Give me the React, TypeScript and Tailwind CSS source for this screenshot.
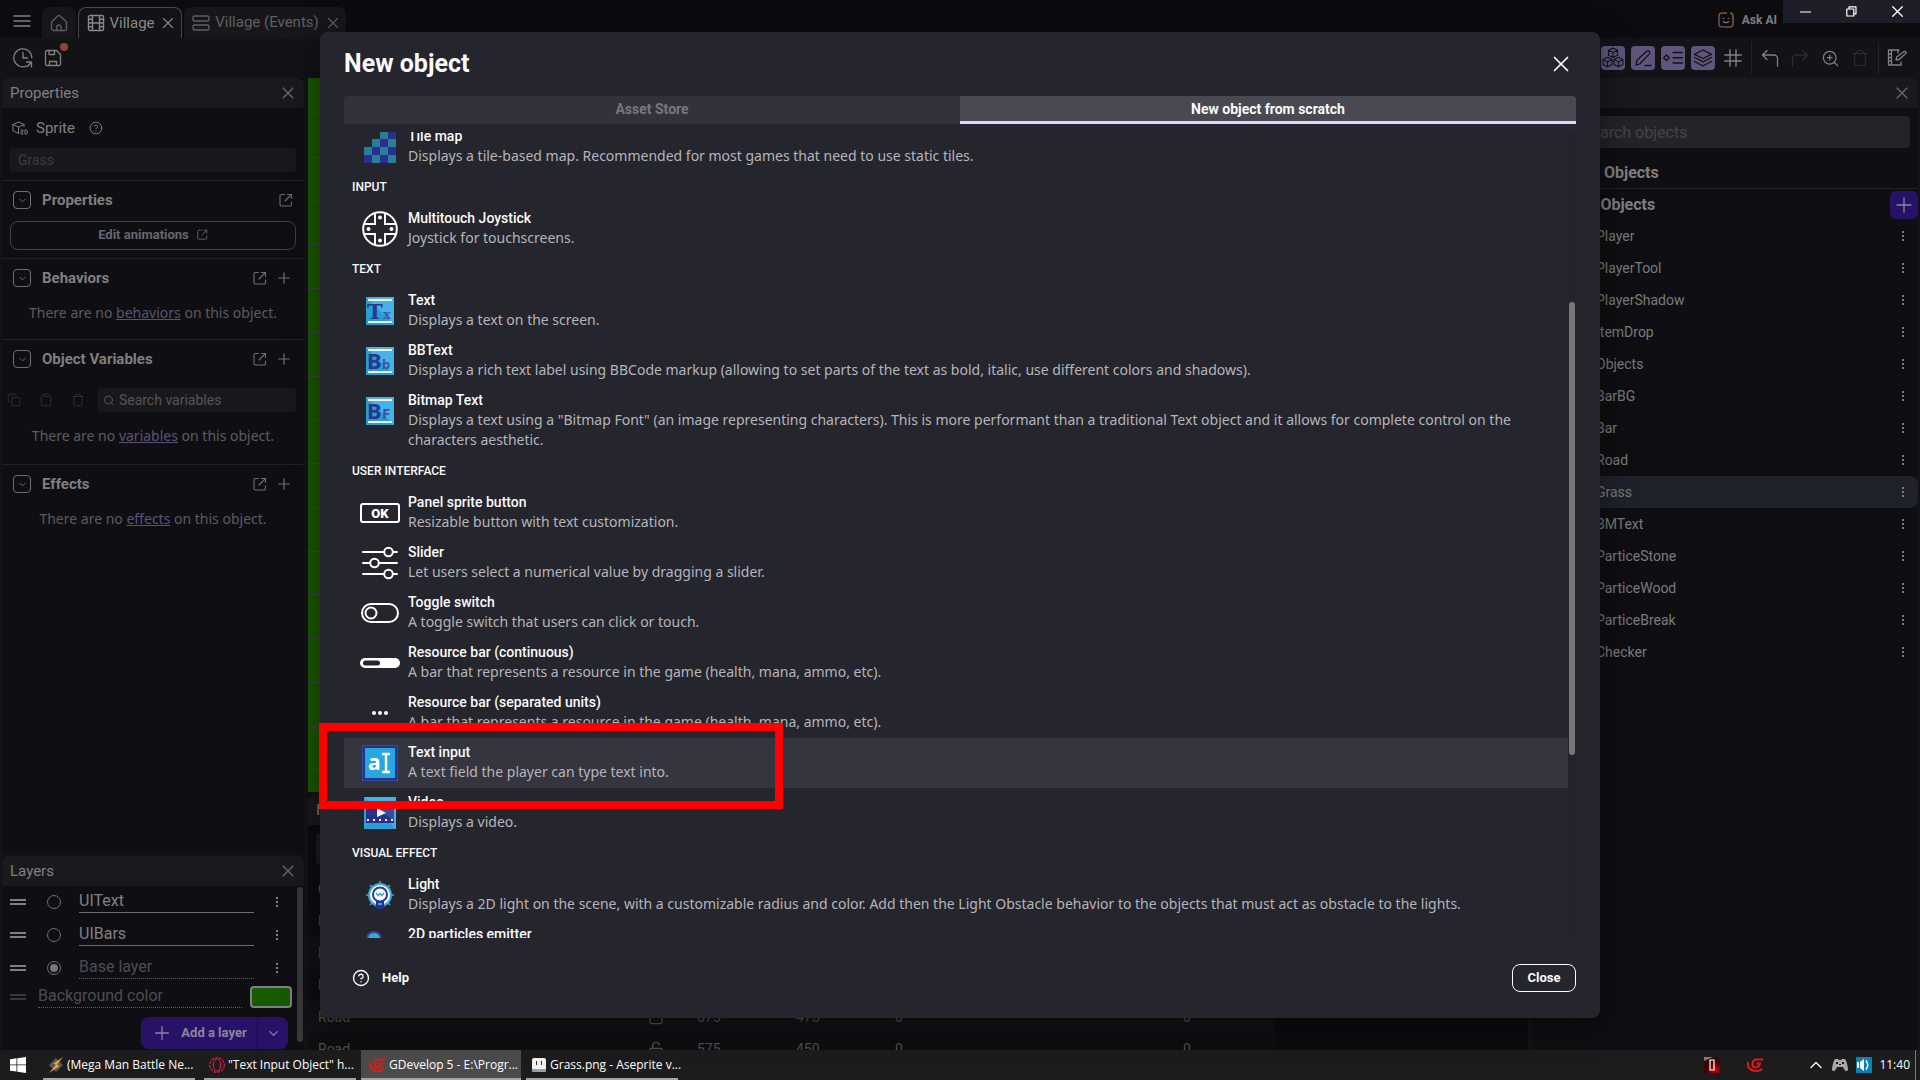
import React, { useState } from 'react';
import {
  Clipboard,
  Copy,
  ChevronDown,
  ChevronUp,
  CircleHelp,
  LockOpen,
  Plus,
  Search,
  Trash,
  X,
  ZoomIn,
} from 'lucide-react';

type ObjectType = { name: string; description: string; icon: React.ReactNode };
type ObjectGroup = { title?: string; items: ObjectType[] };

const OBJECTS = [
  'Player', 'PlayerTool', 'PlayerShadow', 'ItemDrop', 'Objects', 'BarBG', 'Bar',
  'Road', 'Grass', 'BMText', 'ParticeStone', 'ParticeWood', 'ParticeBreak', 'Checker',
];

const INSTANCES = [
  { name: 'Road', x: 675, y: 425 },
  { name: 'Road', x: 575, y: 425 },
  { name: 'Road', x: 625, y: 450 },
  { name: 'Road', x: 675, y: 475 },
  { name: 'Road', x: 575, y: 450 },
];

/* ---------- small icons ---------- */

const Svg = ({ size = 16, box = 16, width = 1, children }: any) => (
  <svg width={size} height={size} viewBox={`0 0 ${box} ${box}`} fill="none" stroke="currentColor" strokeWidth={width} strokeLinecap="round" strokeLinejoin="round" className="shrink-0">
    {children}
  </svg>
);

const ExternalIcon = ({ size = 14 }: { size?: number }) => (
  <Svg size={size} box={14} width={1.1}>
    <path d="M5.500 1.500h-3a1.500 1.500 0 0 0-1.500 1.500v8.500a1.500 1.500 0 0 0 1.500 1.500h8.500a1.500 1.500 0 0 0 1.500-1.500V9M8.500 1.500h4v4M12.500 1.500 6 8" />
  </Svg>
);

const DotsIcon = () => (
  <svg width="4" height="12" viewBox="0 0 4 12" fill="currentColor">
    <path d="M1 1h2v2H1zM1 5h2v2H1zM1 9h2v2H1z" />
  </svg>
);

const HandleIcon = () => (
  <svg width="16" height="8" viewBox="0 0 16 8" fill="currentColor"><path d="M0 1h16v2H0zM0 5h16v2H0z" /></svg>
);

const FilmIcon = () => (
  <Svg size={18} box={18} width={1.4}>
    <rect x="1.500" y="1.500" width="15" height="15" rx="1.500" />
    <path d="M5.500 1.500v15M12.500 1.500v15M5.500 9h7M1.500 5.200h4M1.500 9h4M1.500 12.800h4M12.500 5.200h4M12.500 9h4M12.500 12.800h4" />
  </Svg>
);

const EventsIcon = () => (
  <Svg size={18} box={18} width={1.3}>
    <rect x="1" y="2" width="16" height="5" rx="1.500" />
    <rect x="1" y="11" width="16" height="5" rx="1.500" />
  </Svg>
);

const HomeIcon = () => (
  <Svg size={18} box={18} width={1.3}>
    <path d="M1.500 8 7.800 2a1.800 1.800 0 0 1 2.400 0L16.500 8v6.500a2 2 0 0 1-2 2h-11a2 2 0 0 1-2-2zM6.800 16.500v-3.300a2.200 2.200 0 0 1 4.400 0v3.300" />
  </Svg>
);

const HistoryIcon = () => (
  <Svg size={20} box={20} width={1.3}>
    <path d="M18.800 9.500A9 9 0 1 0 13.500 18M10 4.500V10h4.500M13.500 14h5v5M18.500 14l-4 4.500" />
  </Svg>
);

const SaveIcon = () => (
  <Svg size={18} box={18} width={1.3}>
    <path d="M1.500 3a1.500 1.500 0 0 1 1.500-1.500h9.500l4 4V15a1.500 1.500 0 0 1-1.500 1.500H3A1.500 1.500 0 0 1 1.500 15zM5 1.500v4h5.500v-4M5.500 16.500v-4h7v4" />
  </Svg>
);

const GridIcon = () => (
  <Svg size={18} box={18} width={1.4}>
    <path d="M6 .8v16.400M12 .8v16.400M.8 6h16.400M.8 12h16.400" />
  </Svg>
);

const CubeIcon = () => (
  <Svg size={16} box={16} width={1}>
    <path d="M12 6.500V4.500L6.500 2 1 4.500v6.200L6.500 13.500M1 4.500l5.500 2.600L12 4.500M6.500 7.100v6.400" />
    <path d="M9 10h1.800v2H9v2h2M13 10v4h1c2 0 2-4 0-4z" />
  </Svg>
);

const CubesIcon = () => (
  <Svg size={24} box={24} width={1.1}>
    <path d="m12 2 4.500 2.300v5L12 11.500 7.500 9.300v-5zM7.500 4.300 12 6.500l4.500-2.200M12 6.500v5" />
    <path d="m6.500 11.200 4.500 2.300v5l-4.500 2.300L2 18.500v-5zM2 13.500l4.500 2.200 4.500-2.200M6.500 15.700v5" />
    <path d="m17.500 11.200 4.500 2.300v5l-4.500 2.300-4.500-2.300v-5zM13 13.500l4.500 2.200 4.500-2.200M17.500 15.700v5" />
  </Svg>
);

const PencilIcon = () => (
  <Svg size={24} box={24} width={1.3}>
    <path d="M5 19l.8-4.500L15.500 5.200c2-1.500 4.200.8 2.800 2.700L9 17.800zM14 19.500h6" />
  </Svg>
);

const ListIcon = () => (
  <Svg size={24} box={24} width={1.4}>
    <path d="m5.500 9 2.800 2.800-2.800 2.800-2.800-2.800zM12 6.500h9.500M12 11.800h9.500M12 17h9.500" />
  </Svg>
);

const LayersIcon = () => (
  <Svg size={24} box={24} width={1.3}>
    <path d="m12 4 8.500 4.300-8.500 4.200-8.500-4.200zM3.500 11.500 12 15.800l8.500-4.300M3.500 15.500 12 19.800l8.500-4.300" />
  </Svg>
);

const UndoIcon = () => (
  <Svg size={18} box={18} width={1.3}>
    <path d="M6 1.500 1.500 6 6 10.500M1.500 6H13a3.500 3.500 0 0 1 3.500 3.500V17" />
  </Svg>
);

const RedoIcon = () => (
  <Svg size={18} box={18} width={1.3}>
    <path d="M12 1.500 16.500 6 12 10.500M16.500 6H5a3.500 3.500 0 0 0-3.500 3.500V17" />
  </Svg>
);

const EditSceneIcon = () => (
  <Svg size={20} box={20} width={1.3}>
    <path d="M12 2H1.500v15H14v-3M4.500 2v15M1.500 6h3M1.500 9.500h3M1.500 13h3M11 2v3M9 12l.7-3L17 3.500c1.500-.7 2.700.8 1.700 2L12 11.500z" />
  </Svg>
);

const AskIcon = () => (
  <svg width="16" height="16" viewBox="0 0 16 16" fill="none">
    <defs>
      <linearGradient id="ask" x1="0" y1="1" x2="1" y2="0">
        <stop offset="0" stopColor="#5b4670" />
        <stop offset="1" stopColor="#8a5a24" />
      </linearGradient>
    </defs>
    <path d="M9 1H4a3 3 0 0 0-3 3v8a3 3 0 0 0 3 3h8a3 3 0 0 0 3-3V4a3 3 0 0 0-3-3" stroke="url(#ask)" strokeWidth="1.600" />
    <path d="M5.500 6v1M10.500 6v1M5 9.500q3 2.500 6 0" stroke="#808084" strokeWidth="1.200" />
  </svg>
);

/* ---------- object type icons ---------- */

const TileMapIcon = () => (
  <svg width="32" height="32" viewBox="0 0 4 4" shapeRendering="crispEdges">
    <path fill="#2b7ba1" d="M2 0h1v1H2zM1 1h1v1H1zM3 1h1v1H3zM0 2h1v1H0zM2 2h1v1H2zM1 3h1v1H1zM3 3h1v1H3z" />
    <path fill="#26318a" d="M3 0h1v1H3zM2 1h1v1H2zM1 2h1v1H1zM3 2h1v1H3zM0 3h1v1H0zM2 3h1v1H2z" />
  </svg>
);

const JoystickIcon = () => (
  <svg width="36" height="36" viewBox="0 0 36 36" fill="none" stroke="#fff" strokeWidth="2">
    <circle cx="18" cy="18" r="16.800" />
    <path d="M13 2.500V13H2.500M23 2.500V13h10.500M13 33.500V23H2.500M23 33.500V23h10.500" />
    <g fill="#fff" stroke="none">
      <circle cx="18" cy="6.500" r="2" /><circle cx="18" cy="29.500" r="2" />
      <circle cx="6.500" cy="18" r="2" /><circle cx="29.500" cy="18" r="2" />
    </g>
  </svg>
);

const LetterIcon = ({ big, small, serif }: { big: string; small: string; serif?: boolean }) => (
  <svg width="28" height="28" viewBox="0 0 28 28">
    <path fill="#259fd6" d="M0 0h28v28H0z" />
    <path fill="#45b3e7" d="M0 0h28v28z" />
    <path fill="#f4f6f8" d="M2 2h24v2H2zM2 24h24v2H2z" />
    <g fill="#2b378c" fontWeight="bold" className={serif ? 'font-["DejaVu_Serif",serif]' : 'font-["Noto_Sans",sans-serif]'}>
      <text x="1" y="22" fontSize={serif ? 21 : 22}>{big}</text>
      <text x={serif ? 17 : 16} y="22" fontSize={small === 'F' ? 15 : 13} fill="#3a55a5">{small}</text>
    </g>
  </svg>
);

const OkIcon = () => (
  <svg width="40" height="20" viewBox="0 0 40 20">
    <rect x="1" y="1" width="38" height="18" rx="2" fill="none" stroke="#fff" strokeWidth="2" />
    <text x="20" y="15" textAnchor="middle" fontSize="13" fontWeight="900" fill="#fff" className="font-[Roboto,sans-serif]">OK</text>
  </svg>
);

const SliderIcon = () => (
  <svg width="36" height="34" viewBox="0 0 36 34" fill="none" stroke="#fff" strokeWidth="2" strokeLinecap="round">
    <path d="M1 6h21M31 6h4M1 17h7M17 17h18M1 28h21M31 28h4" />
    <circle cx="26.500" cy="6" r="4.300" /><circle cx="12.500" cy="17" r="4.300" /><circle cx="26.500" cy="28" r="4.300" />
  </svg>
);

const ToggleIcon = () => (
  <svg width="38" height="20" viewBox="0 0 38 20" fill="none" stroke="#fff" strokeWidth="2">
    <rect x="1" y="1" width="36" height="18" rx="9" />
    <circle cx="10" cy="10" r="5.500" />
  </svg>
);

const BarIcon = () => (
  <svg width="40" height="10" viewBox="0 0 40 10">
    <rect width="40" height="10" rx="5" fill="#fff" />
    <rect x="3" y="2.500" width="17" height="5" rx="2.500" fill="#25252e" />
  </svg>
);

const UnitsIcon = () => (
  <svg width="16" height="4" viewBox="0 0 16 4" fill="#fff">
    <circle cx="2" cy="2" r="2" /><circle cx="8" cy="2" r="2" /><circle cx="14" cy="2" r="2" />
  </svg>
);

const TextInputIcon = () => (
  <svg width="36" height="36" viewBox="0 0 36 36">
    <path fill="#2c4fa3" d="M0 0h36v36H0z" />
    <path fill="#26318a" d="M1 1h34v34H1z" />
    <path fill="#28a8e0" d="M3 3h30v30H3z" />
    <text x="6" y="25" fontSize="21" fontWeight="bold" fill="#fff" className='font-["Noto_Sans",sans-serif]'>a</text>
    <path d="M20 9h8M24 9v18M20 27h8" stroke="#fff" strokeWidth="2.400" />
  </svg>
);

const VideoIcon = () => (
  <svg width="32" height="32" viewBox="0 0 32 32">
    <path fill="#2a9fd6" d="M0 0h32v32H0z" />
    <path fill="#40b4e5" d="M0 0h32v32z" />
    <path fill="#26318a" d="M2 6h28v20H2z" />
    <path fill="#3c4a9c" d="M6 6h24v18z" />
    <path fill="#f4f6f8" d="m13 11 9 5-9 4zM3 8h2v2H3zM9 8h2v2H9zM15 8h2v2h-2zM21 8h2v2h-2zM27 8h2v2h-2zM3 22h2v2H3zM9 22h2v2H9zM15 22h2v2h-2zM21 22h2v2h-2zM27 22h2v2h-2z" />
  </svg>
);

const LightIcon = () => (
  <svg width="28" height="28" viewBox="0 0 28 28">
    <path d="M14 0v28M0 14h28M4 4l20 20M24 4 4 24" stroke="#3ba9dd" strokeWidth="1.500" />
    <circle cx="14" cy="14" r="12" fill="#3ba9dd" />
    <circle cx="14" cy="14" r="10" fill="#fff" />
    <circle cx="14" cy="13.500" r="7" fill="#fff" stroke="#2f3a94" strokeWidth="2" />
    <path fill="#26318a" d="M10 20h8v6l-2 2h-4l-2-2z" />
    <path fill="#3ba9dd" d="M12 22h4v2h-4z" />
    <path d="m10 12 2 2.500 2-2 2 2 2-2.500" fill="none" stroke="#3ba9dd" strokeWidth="1.600" />
  </svg>
);

const ParticlesIcon = () => (
  <svg width="28" height="28" viewBox="0 0 28 28">
    <circle cx="8" cy="8" r="7" fill="#3ba9dd" stroke="#2f4a9f" strokeWidth="2" />
    <circle cx="20" cy="18" r="6" fill="#26318a" />
  </svg>
);

const GROUPS: ObjectGroup[] = [
  {
    items: [
      { name: 'Tile map', description: 'Displays a tile-based map. Recommended for most games that need to use static tiles.', icon: <TileMapIcon /> },
    ],
  },
  {
    title: 'Input',
    items: [
      { name: 'Multitouch Joystick', description: 'Joystick for touchscreens.', icon: <JoystickIcon /> },
    ],
  },
  {
    title: 'Text',
    items: [
      { name: 'Text', description: 'Displays a text on the screen.', icon: <LetterIcon big="T" small="x" serif /> },
      { name: 'BBText', description: 'Displays a rich text label using BBCode markup (allowing to set parts of the text as bold, italic, use different colors and shadows).', icon: <LetterIcon big="B" small="b" /> },
      { name: 'Bitmap Text', description: 'Displays a text using a "Bitmap Font" (an image representing characters). This is more performant than a traditional Text object and it allows for complete control on the characters aesthetic.', icon: <LetterIcon big="B" small="F" /> },
    ],
  },
  {
    title: 'User interface',
    items: [
      { name: 'Panel sprite button', description: 'Resizable button with text customization.', icon: <OkIcon /> },
      { name: 'Slider', description: 'Let users select a numerical value by dragging a slider.', icon: <SliderIcon /> },
      { name: 'Toggle switch', description: 'A toggle switch that users can click or touch.', icon: <ToggleIcon /> },
      { name: 'Resource bar (continuous)', description: 'A bar that represents a resource in the game (health, mana, ammo, etc).', icon: <BarIcon /> },
      { name: 'Resource bar (separated units)', description: 'A bar that represents a resource in the game (health, mana, ammo, etc).', icon: <UnitsIcon /> },
      { name: 'Text input', description: 'A text field the player can type text into.', icon: <TextInputIcon /> },
      { name: 'Video', description: 'Displays a video.', icon: <VideoIcon /> },
    ],
  },
  {
    title: 'Visual effect',
    items: [
      { name: 'Light', description: 'Displays a 2D light on the scene, with a customizable radius and color. Add then the Light Obstacle behavior to the objects that must act as obstacle to the lights.', icon: <LightIcon /> },
      { name: '2D particles emitter', description: 'Displays a large number of small particles to create visual effects.', icon: <ParticlesIcon /> },
    ],
  },
];

/* ---------- editor ---------- */

const TitleBar = () => (
  <header className="flex h-[38px] shrink-0 items-end bg-[#0c0c10] pl-[13px]">
    <button aria-label="Main menu" className="mr-[11px] flex h-[34px] items-center text-[#808084]">
      <Svg size={18} box={18} width={1.4}><path d="M1 4h16M1 9h16M1 14h16" /></Svg>
    </button>
    <div className="flex items-end gap-0.5">
      <button aria-label="Home" className="flex h-[31px] w-[34px] items-center justify-center rounded-t-lg bg-[#17171b] text-[#5f5f63]"><HomeIcon /></button>
      <div className="flex h-[31px] w-[104px] items-center justify-between rounded-t-lg border border-b-0 border-[#47474c] bg-[#131317] pr-1 pl-2 text-[#87878a]">
        <FilmIcon />
        <span className="text-[15px]">Village</span>
        <button aria-label="Close Village"><X size={18} strokeWidth={1.5} /></button>
      </div>
      <div className="flex h-[31px] w-[162px] items-center justify-between rounded-t-lg bg-[#17171b] pr-1 pl-2 text-[#5f5f63]">
        <EventsIcon />
        <span className="text-[15px]">Village (Events)</span>
        <button aria-label="Close Village (Events)"><X size={18} strokeWidth={1.5} /></button>
      </div>
    </div>
    <button className="mr-[6px] mb-[10px] ml-auto flex items-center gap-2 text-[12px] leading-4 font-bold text-[#7c7c80]">
      <AskIcon />
      Ask AI
    </button>
    <div className="mb-auto flex h-[23px] w-[137px] items-center justify-around bg-[#1e1e29] text-white">
      <button aria-label="Minimize"><Svg size={11} box={11} width={1.2}><path d="M.5 6h10" /></Svg></button>
      <button aria-label="Restore"><Svg size={11} box={11} width={1.2}><path d="M.8 3h7v7h-7zM3 3V.8h7v7H8" /></Svg></button>
      <button aria-label="Close window"><Svg size={11} box={11} width={1.3}><path d="m.7.7 9.600 9.600M10.300.7.7 10.300" /></Svg></button>
    </div>
  </header>
);

const ToolToggle = ({ label, children }: { label: string; children: React.ReactNode }) => (
  <button aria-label={label} className="flex size-6 items-center justify-center rounded-sm bg-[#5f557c] text-[#131317]">{children}</button>
);

const Toolbar = () => (
  <div className="flex h-10 shrink-0 items-center bg-[#131317] pr-[11px] pl-[13px] text-[#808084]">
    <button aria-label="History" className="mr-[11px]"><HistoryIcon /></button>
    <button aria-label="Save" className="relative">
      <SaveIcon />
      <span className="absolute -top-1.5 -right-1.5 size-2 rounded-full bg-[#8b4436]" />
    </button>
    <div className="ml-auto flex items-center gap-[6px]">
      <ToolToggle label="Objects"><CubesIcon /></ToolToggle>
      <ToolToggle label="Properties"><PencilIcon /></ToolToggle>
      <ToolToggle label="Instances"><ListIcon /></ToolToggle>
      <ToolToggle label="Layers"><LayersIcon /></ToolToggle>
      <button aria-label="Grid" className="flex w-6 justify-center"><GridIcon /></button>
      <span className="h-8 w-px bg-[#232328]" />
      <button aria-label="Undo" className="flex w-6 justify-center"><UndoIcon /></button>
      <button aria-label="Redo" className="flex w-6 justify-center text-[#2c2c30]"><RedoIcon /></button>
      <button aria-label="Zoom in" className="flex w-6 justify-center"><ZoomIn size={19} strokeWidth={1.6} /></button>
      <button aria-label="Delete" className="flex w-6 justify-center text-[#2c2c30]"><Trash size={18} strokeWidth={1.6} /></button>
      <span className="h-8 w-px bg-[#232328]" />
      <button aria-label="Edit scene" className="flex w-6 justify-center"><EditSceneIcon /></button>
    </div>
  </div>
);

const PanelHeader = ({ title }: { title: string }) => (
  <div className="flex h-[30px] shrink-0 items-center justify-between rounded-t-md bg-[#1a1a1e] pr-[6px] pl-2 text-[15px] text-[#808083]">
    {title}
    <button aria-label="Close panel" className="text-[#6d6d78]"><X size={20} strokeWidth={1.4} /></button>
  </div>
);

const Section = ({ title, add, children }: { title: string; add?: boolean; children: React.ReactNode }) => (
  <section className="border-t border-[#212126]">
    <div className="flex h-10 items-center pr-[11px] pb-0.5 pl-[11px] text-[#6d6d78]">
      <button aria-label={`Fold ${title}`} className="flex size-[18px] items-center justify-center rounded-sm border border-[#6d6d78]"><ChevronDown size={11} /></button>
      <h3 className="ml-[11px] text-[15px] font-bold text-[#7f7f80]">{title}</h3>
      <div className="ml-auto flex items-center gap-2">
        <button aria-label={`Open ${title}`}><ExternalIcon /></button>
        {add && <button aria-label={`Add to ${title}`}><Plus size={18} strokeWidth={1.6} /></button>}
      </div>
    </div>
    {children}
  </section>
);

const EmptyNote = ({ word }: { word: string }) => (
  <p className='text-center font-["Noto_Sans",sans-serif] text-[14px] leading-[28px] text-[#5c5c5f]'>
    There are no <a href={`#${word}`} className="text-[#5a5373] underline">{word}</a> on this object.
  </p>
);

const PropertiesPanel = () => (
  <div className="flex min-h-0 flex-1 flex-col bg-[#0f0f13]">
    <PanelHeader title="Properties" />
    <div className="flex h-10 items-center gap-2 pl-[10px] text-[15px] text-[#7f7f80]">
      <CubeIcon />
      Sprite
      <button aria-label="Help about sprites" className="ml-1.5"><CircleHelp size={14} strokeWidth={1.6} /></button>
    </div>
    <input aria-label="Object name" placeholder="Grass" className="mx-2 mb-2 h-6 rounded bg-[#19191d] px-2 text-[14px] text-[#808083] outline-none placeholder:text-[#3b3b3e]" />
    <Section title="Properties">
      <button className="mx-2 mb-2 flex h-[29px] w-[286px] items-center justify-center gap-2 rounded-lg border border-[#3f3f47] pb-0.5 text-[13px] font-bold text-[#66666f]">
        Edit animations <ExternalIcon size={11} />
      </button>
    </Section>
    <Section title="Behaviors" add>
      <div className="pb-3"><EmptyNote word="behaviors" /></div>
    </Section>
    <Section title="Object Variables" add>
      <div className="flex items-center pt-2 pr-2 pl-[5px] text-[#2f2f34]">
        <button aria-label="Copy"><Copy size={14} strokeWidth={1.6} /></button>
        <button aria-label="Paste" className="ml-[18px]"><Clipboard size={14} strokeWidth={1.6} /></button>
        <button aria-label="Delete variable" className="ml-[18px]"><Trash size={14} strokeWidth={1.6} /></button>
        <label className="ml-[13px] flex h-6 flex-1 items-center gap-1 rounded bg-[#19191d] px-[5px] text-[#5c5c5f]">
          <Search size={13} strokeWidth={1.8} />
          <input aria-label="Search variables" placeholder="Search variables" className="w-full bg-transparent text-[14px] outline-none placeholder:text-[#555558]" />
        </label>
      </div>
      <div className="pt-[10px] pb-[14px]"><EmptyNote word="variables" /></div>
    </Section>
    <Section title="Effects" add>
      <EmptyNote word="effects" />
    </Section>
  </div>
);

const LayerRow = ({ name, base }: { name: string; base?: boolean }) => (
  <div className="flex h-[33px] items-center pr-[18px] pb-px pl-2 text-[#808083]">
    <HandleIcon />
    <input type="radio" name="layer" aria-label={`Select ${name}`} defaultChecked={base} className="ml-[22px] size-3 shrink-0 appearance-none rounded-full outline-1 outline-[#6d6d78] checked:border-2 checked:border-[#0f0f13] checked:bg-[#77737f]" />
    {base ? (
      <input aria-label="Base layer name" placeholder={name} className="ml-[19px] h-[22px] w-[175px] border-b border-dotted border-[#5c5c62] bg-transparent pb-0.5 text-[16px] outline-none placeholder:text-[#4c4c51]" />
    ) : (
      <input aria-label={`${name} name`} defaultValue={name} className="ml-[19px] h-[22px] w-[175px] border-b border-[#6d6d78] bg-transparent pb-0.5 text-[16px] outline-none" />
    )}
    <button aria-label={`${name} menu`} className="ml-auto"><DotsIcon /></button>
  </div>
);

const LayersPanel = () => (
  <div className="flex shrink-0 flex-col bg-[#0f0f13]">
    <PanelHeader title="Layers" />
    <div className="flex h-[164px]">
      <div className="min-w-0 flex-1">
        <LayerRow name="UIText" />
        <LayerRow name="UIBars" />
        <LayerRow name="Base layer" base />
        <div className="flex h-6 items-center pl-2 text-[#39393c]">
          <HandleIcon />
          <input aria-label="Background color" placeholder="Background color" className="mr-2 ml-3 h-[22px] w-[204px] border-b border-dotted border-[#5c5c62] bg-transparent pb-0.5 text-[16px] outline-none placeholder:text-[#4c4c51]" />
          <button aria-label="Pick the background color" className="h-[22px] w-[42px] rounded-sm border-2 border-[#808083] bg-[#175a00]" />
        </div>
        <div className="mt-2 mr-[9px] flex h-8 justify-end text-[13px] font-bold text-[#8b859c]">
          <button className="flex w-[116px] items-center justify-center gap-2 rounded-l-lg bg-[#271267]"><Plus size={22} strokeWidth={1.4} />Add a layer</button>
          <button aria-label="More layer types" className="flex w-[31px] items-center justify-center rounded-r-lg border-l border-[#1c0d4b] bg-[#271267]"><ChevronDown size={15} /></button>
        </div>
      </div>
      <div className="mt-px mr-px h-[155px] w-[6px] rounded-full bg-[#39393c]" />
    </div>
  </div>
);

const SceneCanvas = () => (
  <svg className="min-h-0 w-full flex-1 bg-[#195700]" aria-label="Scene">
    {Array.from({ length: 17 }, (_, i) => (
      <path key={i} d={`M0 ${35.5 + Math.round(i * 43.75)}h1220`} stroke="#3a4850" />
    ))}
  </svg>
);

const InstancesPanel = () => (
  <div className="mt-[3px] flex h-[255px] shrink-0 flex-col overflow-hidden bg-[#0c0c10]">
    <PanelHeader title="Instances List" />
    <input aria-label="Search instances" placeholder="Search instances" className="m-2 h-8 shrink-0 rounded bg-[#1b1b1f] px-3 text-[16px] outline-none placeholder:text-[#444448]" />
    <table className="w-[967px] table-fixed text-left text-[14px] text-[#515155]">
      <thead>
        <tr className="h-8">
          <th className="w-[340px] pl-[10px]">Object name</th>
          <th className="w-[49px]"><LockOpen size={16} aria-label="Locked" /></th>
          <th className="w-[99px]">X</th>
          <th className="w-[99px]">Y</th>
          <th className="w-[288px]">Angle</th>
          <th>Z</th>
        </tr>
      </thead>
      <tbody>
        {INSTANCES.map((instance, i) => (
          <tr key={i} className="h-8 odd:bg-[#0d0e10] even:bg-[#111215]">
            <td className="pl-[10px]">{instance.name}</td>
            <td><LockOpen size={16} /></td>
            <td>{instance.x}</td>
            <td>{instance.y}</td>
            <td>0</td>
            <td>0</td>
          </tr>
        ))}
      </tbody>
    </table>
  </div>
);

const ObjectsPanel = () => (
  <aside className="mr-0.5 flex w-[386px] shrink-0 flex-col bg-[#0f0f13]">
    <PanelHeader title="Objects" />
    <input aria-label="Search objects" placeholder="Search objects" className="m-2 h-8 rounded bg-[#242428] pl-[42px] text-[16px] outline-none placeholder:text-[#444448]" />
    <h3 className="flex h-[33px] items-center border-b border-[#212126] pt-px pl-[22px] text-[16px] font-bold text-[#7f7f80]">Global Objects</h3>
    <div className="flex h-[31px] items-center justify-between pl-5">
      <h3 className="text-[16px] font-bold text-[#7f7f80]">Scene Objects</h3>
      <button aria-label="Add an object" className="flex size-7 items-center justify-center rounded-md bg-[#271267] text-[#8b859c]"><Plus size={24} strokeWidth={1.3} /></button>
    </div>
    <ul>
      {OBJECTS.map((name) => (
        <li key={name} className={`flex h-8 items-center justify-between rounded-lg pr-[13px] pl-16 text-[14px] text-[#7b7b7d] ${name === 'Grass' ? 'bg-[#1f222a]' : ''}`}>
          {name}
          <button aria-label={`${name} menu`}><DotsIcon /></button>
        </li>
      ))}
    </ul>
  </aside>
);

/* ---------- dialog ---------- */

const NewObjectDialog = () => {
  const [selected, setSelected] = useState('Text input');
  return (
    <div className="absolute inset-x-0 top-0 bottom-[30px] flex justify-center px-8 py-8">
      <div role="dialog" aria-label="New object" className="relative flex w-full max-w-[1280px] flex-col rounded-lg bg-[#25252e] px-6 text-[#fafafa] shadow-[0_8px_36px_rgba(0,0,0,0.45)]">
        <div className="flex h-16 shrink-0 items-center justify-between pr-0.5 pb-px">
          <h2 className="text-[25px] font-bold">New object</h2>
          <button aria-label="Close dialog"><X size={26} strokeWidth={1.6} /></button>
        </div>
        <div role="tablist" className="flex h-7 shrink-0 text-[14px] font-bold">
          <button role="tab" aria-selected="false" className="flex-1 rounded-tl bg-[#32323b] pb-0.5 text-[#77777b]">Asset Store</button>
          <button role="tab" aria-selected="true" className="flex-1 rounded-tr border-b-[3px] border-[#e0d7ff] bg-[#494952] pt-0.5">New object from scratch</button>
        </div>
        <div className="mt-2 flex min-h-0 flex-1">
          <div className="min-w-0 flex-1 overflow-hidden">
            <div className="-mt-[10px]">
              {GROUPS.map((group, i) => (
                <section key={i}>
                  {group.title && <h3 className="h-8 pl-2 text-[12px] leading-[30px] font-medium uppercase">{group.title}</h3>}
                  {group.items.map((item) => (
                    <button
                      key={item.name}
                      onClick={() => setSelected(item.name)}
                      className={`flex w-full items-start gap-2 pr-10 pl-4 text-left text-[14px] leading-5 ${selected === item.name ? 'bg-[#35353f]' : ''}`}
                    >
                      <span className="mt-[5px] flex size-10 shrink-0 items-center justify-center">{item.icon}</span>
                      <span className="pt-1 pb-1.5">
                        <span className="block font-medium">{item.name}</span>
                        <span className='block font-["Noto_Sans",sans-serif] text-[#b5b5b9]'>{item.description}</span>
                      </span>
                    </button>
                  ))}
                </section>
              ))}
            </div>
          </div>
          <div className="ml-px w-[7px] bg-[#23232b] pt-[170px]">
            <div className="h-[453px] w-[6px] rounded-full bg-[#77777b]" />
          </div>
        </div>
        <div className="flex h-20 shrink-0 items-center justify-between text-[13px] font-bold">
          <button className="flex items-center gap-3 pl-2"><CircleHelp size={18} strokeWidth={1.8} />Help</button>
          <button className="h-7 w-16 rounded-lg border border-[#fafafa]">Close</button>
        </div>
        <div className="pointer-events-none absolute top-[691px] -left-px h-[86px] w-[464px] border-8 border-[#ff0000]" />
      </div>
    </div>
  );
};

/* ---------- taskbar ---------- */

const GDevelopLogo = () => (
  <svg width="17" height="16" viewBox="0 0 17 16" fill="none" stroke="#e01a1a">
    <path d="M1 5c-1 6 3 9 8 9 3 0 5-.8 6-2.500" strokeWidth="2" />
    <path d="M16 2.500H9.500C5 2.500 4 10 8 10.500c3 0 4-.8 5-4H9.500" strokeWidth="2.200" />
  </svg>
);

const WinampIcon = () => (
  <svg width="16" height="16" viewBox="0 0 16 16">
    <path fill="#57585c" d="m8 1 7 7-7 7-7-7z" />
    <path fill="#f2a23a" d="M15 0 5.500 6.500 8 8l-7 8L11.500 9 9 7.500z" />
  </svg>
);

const OperaIcon = () => (
  <svg width="16" height="16" viewBox="0 0 16 16" fill="none" stroke="#e0194b">
    <circle cx="8" cy="8" r="7.300" strokeWidth="1.200" strokeDasharray="3 1" />
    <ellipse cx="8" cy="8" rx="3.600" ry="6" strokeWidth="1.200" />
  </svg>
);

const AsepriteIcon = () => (
  <svg width="14" height="14" viewBox="0 0 14 14">
    <rect width="14" height="14" rx="2" fill="#f2f2f2" />
    <path fill="#8fa3b3" d="M0 11h14v1.500a1.500 1.500 0 0 1-1.500 1.500h-11A1.500 1.500 0 0 1 0 12.500z" />
    <path fill="#333" d="M4 3h1v4H4zM9 3h1v4H9z" />
  </svg>
);

const TaskButton = ({ icon, text, active }: { icon: React.ReactNode; text: string; active?: boolean }) => (
  <button className={`flex h-full items-center gap-[3px] border-b-2 border-[#a5a5a5] pt-0.5 whitespace-nowrap ${active ? 'w-40 bg-[#4b4b4b] pl-2' : 'w-[152px] pl-1'}`}>
    <span className="flex w-[17px] shrink-0 justify-center">{icon}</span>
    {text}
  </button>
);

const Taskbar = () => (
  <footer className='flex h-[30px] shrink-0 items-center bg-[#1c1c1c] font-["Open_Sans",sans-serif] text-[12px] text-white'>
    <button aria-label="Start" className="mr-[17px] ml-[10px]">
      <svg width="16" height="16" viewBox="0 0 16 16" fill="#fff"><path d="M0 2.200 6.500 1.300v6.200H0zM7.300 1.200 16 0v7.500H7.300zM0 8.300h6.500v6.300L0 13.700zM7.300 8.300H16V16l-8.700-1.200z" /></svg>
    </button>
    <div className="flex h-full gap-[5px]">
      <div className="mr-1 h-full"><TaskButton icon={<WinampIcon />} text="(Mega Man Battle Ne..." /></div>
      <TaskButton icon={<OperaIcon />} text={'"Text Input Object" h...'} />
      <TaskButton icon={<GDevelopLogo />} text="GDevelop 5 - E:\Progr..." active />
      <TaskButton icon={<AsepriteIcon />} text="Grass.png - Aseprite v..." />
    </div>
    <div className="ml-auto flex h-full items-center">
      <svg width="16" height="16" viewBox="0 0 16 16" className="mr-[27px]">
        <defs><radialGradient id="tray" cx=".7" cy=".8"><stop offset="0" stopColor="#d80000" /><stop offset="1" stopColor="#3a0505" /></radialGradient></defs>
        <rect width="16" height="16" rx="1" fill="url(#tray)" />
        <path fill="#8a7777" d="M0 0h9L0 4z" />
        <path d="M6 3h4v10H6z" fill="none" stroke="#fff" strokeWidth="1.200" />
      </svg>
      <GDevelopLogo />
      <ChevronUp size={20} strokeWidth={1.500} className="mr-[6px] ml-[42px]" />
      <svg width="16" height="14" viewBox="0 0 16 14" className="mr-2">
        <path fill="#a9a9a9" d="M3 1h3l1 1h2l1-1h3c2 3 3 8 3 11-1 2-3 1-4-1l-1-2H5l-1 2c-1 2-3 3-4 1C0 9 1 4 3 1z" />
        <path fill="#1c1c1c" d="M4 4h2v2H4zM10 4h2v2h-2zM7 6h2v1H7z" />
      </svg>
      <svg width="16" height="16" viewBox="0 0 16 16" className="mr-[7px]">
        <rect width="16" height="16" rx="1" fill="#0a84b8" />
        <path fill="#fff" d="M1 5h2v6H1zM4 5l4-3v12l-4-3z" />
        <path d="M10 3.500q3.500 4.500 0 9" fill="none" stroke="#fff" strokeWidth="1.500" />
      </svg>
      <time className="mr-[5px]">11:40</time>
      <span className="mr-1 h-full w-px bg-[#7a7a7a]" />
    </div>
  </footer>
);

export default function App() {
  return (
    <div className="relative flex h-screen flex-col overflow-hidden bg-[#131317] font-[Roboto,sans-serif]">
      <TitleBar />
      <Toolbar />
      <main className="flex min-h-0 flex-1">
        <aside className="ml-0.5 flex w-[302px] shrink-0 flex-col gap-[3px]">
          <PropertiesPanel />
          <LayersPanel />
        </aside>
        <div className="mr-1 ml-1 flex min-w-0 flex-1 flex-col">
          <SceneCanvas />
          <InstancesPanel />
        </div>
        <ObjectsPanel />
      </main>
      <NewObjectDialog />
      <Taskbar />
    </div>
  );
}
